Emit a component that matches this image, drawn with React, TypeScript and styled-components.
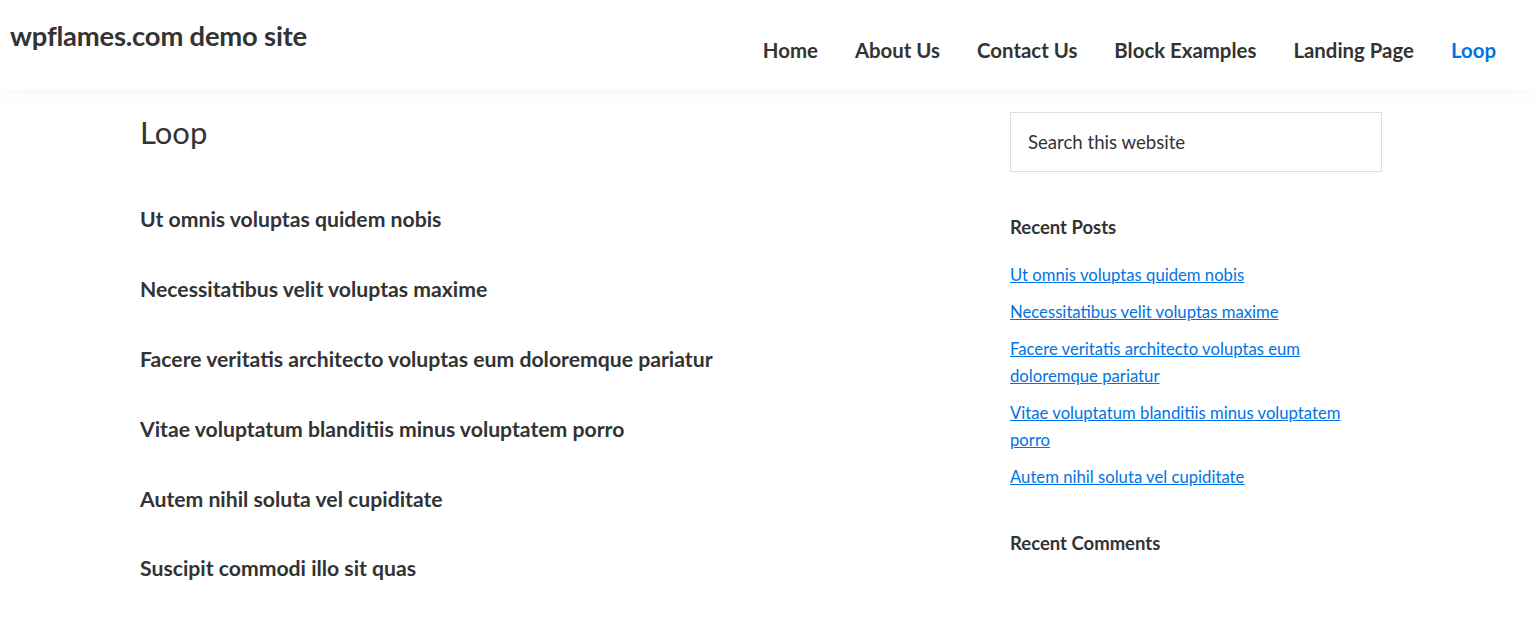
import React from 'react';
import styled, { createGlobalStyle } from 'styled-components';

const GlobalStyle = createGlobalStyle`
  body {
    margin: 0;
    background: #fff;
    color: #333;
    font-family: Lato, "Open Sans", sans-serif;
  }
`;

const Header = styled.header`
  display: flex;
  justify-content: space-between;
  align-items: flex-start;
  height: 90px;
  padding: 0 40px 0 10px;
  background: #fff;
  box-shadow: 0 0 20px rgba(0, 0, 0, 0.05);
  position: relative;
`;

const SiteTitle = styled.div`
  font-size: 27.4px;
  font-weight: 700;
  color: #333;
  margin-top: 19px;
  letter-spacing: -0.2px;
`;

const Nav = styled.nav`
  display: flex;
  gap: 37px;
  margin-top: 38px;
`;

const NavItem = styled.a<{ $active?: boolean }>`
  font-size: 20.4px;
  font-weight: 700;
  color: ${p => (p.$active ? '#0073e5' : '#333')};
  text-decoration: none;
`;

const Wrap = styled.div`
  display: grid;
  grid-template-columns: 1fr 372px;
  gap: 60px;
  width: 1242px;
  margin-left: 140px;
  padding-top: 20px;
`;

const Main = styled.main`
  display: flex;
  flex-direction: column;
`;

const PageTitle = styled.h1`
  margin: 0 0 50px;
  font-size: 31px;
  font-weight: 400;
  line-height: 44px;
`;

const PostTitle = styled.h2`
  margin: 0 0 40px;
  font-size: 21.2px;
  font-weight: 700;
  line-height: 30px;
  &:nth-of-type(n + 5) {
    margin-top: -0.5px;
  }
`;

const Sidebar = styled.aside`
  display: flex;
  flex-direction: column;
  padding-top: 2px;
`;

const Search = styled.input`
  box-sizing: border-box;
  width: 100%;
  height: 60px;
  padding: 0 17px;
  border: 1px solid #ddd;
  font-family: inherit;
  font-size: 18.6px;
  color: #333;
  &::placeholder {
    color: #333;
  }
`;

const WidgetTitle = styled.h3<{ $space?: number }>`
  margin: 0 0 ${p => p.$space ?? 20}px;
  font-size: 18.5px;
  font-weight: 700;
  line-height: 27px;
`;

const Widget = styled.section<{ $gap?: number }>`
  margin-top: ${p => p.$gap ?? 42}px;
`;

const LinkList = styled.ul`
  list-style: none;
  margin: 0;
  padding: 0 20px 0 0;
  display: flex;
  flex-direction: column;
  gap: 10px;
`;

const LinkItem = styled.li`
  font-size: 16.7px;
  line-height: 27px;
  a {
    color: #0073e5;
    text-decoration: underline;
  }
`;

const posts = [
  'Ut omnis voluptas quidem nobis',
  'Necessitatibus velit voluptas maxime',
  'Facere veritatis architecto voluptas eum doloremque pariatur',
  'Vitae voluptatum blanditiis minus voluptatem porro',
  'Autem nihil soluta vel cupiditate',
  'Suscipit commodi illo sit quas',
];

const navItems = ['Home', 'About Us', 'Contact Us', 'Block Examples', 'Landing Page', 'Loop'];

export default function App() {
  return (
    <>
      <GlobalStyle />
      <Header>
        <SiteTitle>wpflames.com demo site</SiteTitle>
        <Nav>
          {navItems.map(n => (
            <NavItem key={n} href="#" $active={n === 'Loop'}>
              {n}
            </NavItem>
          ))}
        </Nav>
      </Header>
      <Wrap>
        <Main>
          <PageTitle>Loop</PageTitle>
          {posts.map(p => (
            <PostTitle key={p}>{p}</PostTitle>
          ))}
        </Main>
        <Sidebar>
          <Search placeholder="Search this website" />
          <Widget>
            <WidgetTitle $space={21}>Recent Posts</WidgetTitle>
            <LinkList>
              {posts.slice(0, 5).map(p => (
                <LinkItem key={p}>
                  <a href="#">{p}</a>
                </LinkItem>
              ))}
            </LinkList>
          </Widget>
          <Widget $gap={39}>
            <WidgetTitle>Recent Comments</WidgetTitle>
          </Widget>
        </Sidebar>
      </Wrap>
    </>
  );
}
